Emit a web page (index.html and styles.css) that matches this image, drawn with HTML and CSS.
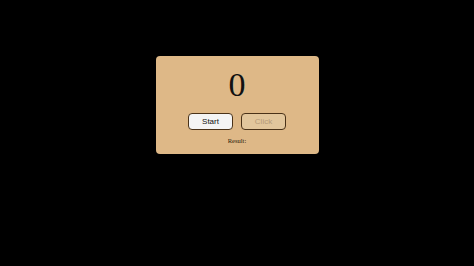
FILE: index.html
```html
<!DOCTYPE html>
<html lang="en">
<head>
    <meta charset="UTF-8">
    <title>Click counter</title>
    <link rel="stylesheet" href="styles.css">
</head>
<body>
    <div class="card">
        <div class="count" id="count">0</div>
        <div class="buttons">
            <button class="btn start" id="start">Start</button>
            <button class="btn click" id="click" disabled>Click</button>
        </div>
        <div class="result">Result: <span id="result"></span></div>
    </div>
</body>
</html>
```

FILE: styles.css
```css
html, body{
    margin:0;
    height:100%;
    background-color:#000;
}
body{
    display:flex;
    justify-content:center;
    font-family:"Liberation Serif", serif;
}
.card{
    margin-top:56px;
    width:163px;
    height:98px;
    box-sizing:border-box;
    padding-top:12px;
    background-color:#deb887;
    border-radius:4px;
    display:flex;
    flex-direction:column;
    align-items:center;
}
.count{
    font-size:34px;
    line-height:34px;
    color:#111;
}
.buttons{
    margin-top:11px;
    display:flex;
    gap:8px;
}
.btn{
    width:45px;
    height:17px;
    box-sizing:border-box;
    padding:0;
    border:1.5px solid #4a3218;
    border-radius:4px;
    font-family:"Liberation Sans", sans-serif;
    font-size:8px;
}
.start{
    background-color:#f4f4f4;
    color:#111;
}
.click{
    background-color:#e2c69c;
    color:#b59a78;
}
.result{
    margin-top:7px;
    font-size:6.5px;
    line-height:8px;
    color:#2a1a0a;
}
```
